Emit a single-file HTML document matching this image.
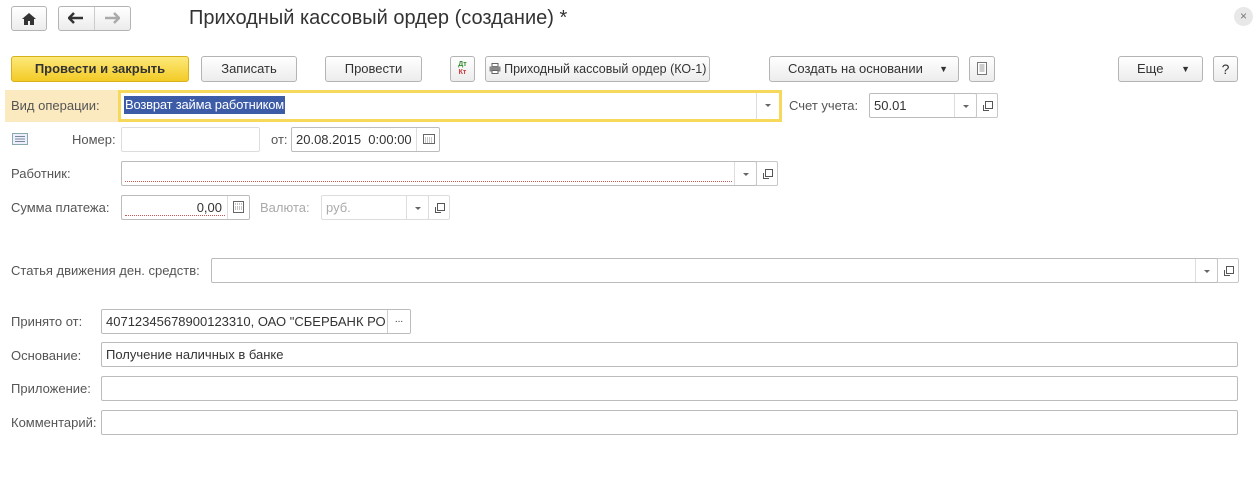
<!DOCTYPE html>
<html><head><meta charset="utf-8"><style>
*{box-sizing:border-box;margin:0;padding:0}
body{width:1257px;height:483px;background:#fff;position:relative;overflow:hidden;font-family:"Liberation Sans",Arial,sans-serif;font-size:13px;color:#333;white-space:nowrap}
.a{position:absolute}
.btn{position:absolute;border:1px solid #b4b4b4;border-radius:3px;background:linear-gradient(#fff,#ececec);text-align:center;color:#333;font-size:13px;line-height:24px}
.f{position:absolute;border:1px solid #bcbcbc;border-radius:2px;background:#fff;height:25px;line-height:23px;padding-left:4px;font-size:13px;color:#333;overflow:hidden}
.lbl{position:absolute;font-size:13px;color:#555;line-height:16px}
.dd{position:absolute;top:0;bottom:0;border-left:1px solid #ddd;width:22px}
.dd:after{content:"";position:absolute;left:8px;top:11px;border-left:3px solid transparent;border-right:3px solid transparent;border-top:3px solid #666}
.op{position:absolute;border:1px solid #c8c8c8;border-radius:0 2px 2px 0;background:#fff;width:22px;height:25px}
.op:after{content:"";position:absolute;left:8px;top:7px;width:6px;height:6px;border:1px solid #555;box-shadow:-2px 2px 0 -1px #fff,-3px 3px 0 -1px #555}
</style></head><body>
<div class="btn" style="left:11px;top:6px;width:36px;height:25px;"><svg width="14" height="12" viewBox="0 0 14 12" style="margin-top:6px"><path d="M7 0L0 6h2v6h4V8h2v4h4V6h2z" fill="#333"/></svg></div>
<div class="btn" style="left:58px;top:6px;width:73px;height:25px;"></div>
<div class="a" style="left:94px;top:7px;width:1px;height:23px;background:#ccc"></div>
<svg class="a" style="left:68px;top:12px" width="16" height="12"><path d="M1 6h14M6 1L1 6l5 5" stroke="#333" stroke-width="2.5" fill="none"/></svg>
<svg class="a" style="left:104px;top:12px" width="16" height="12"><path d="M1 6h14M10 1l5 5-5 5" stroke="#aaa" stroke-width="2.5" fill="none"/></svg>
<div class="a" style="left:189px;top:7px;font-size:20px;color:#333">Приходный кассовый ордер (создание) *</div>
<div class="a" style="left:1234px;top:7px;width:19px;height:19px;border-radius:50%;background:#e8e8e8;text-align:center;line-height:18px;font-size:12px;color:#777">×</div>

<div class="btn" style="left:11px;top:56px;width:178px;height:26px;background:linear-gradient(#fde97a,#f3cb26);border-color:#d7b21c;font-weight:bold;color:#333">Провести и закрыть</div>
<div class="btn" style="left:201px;top:56px;width:96px;height:26px">Записать</div>
<div class="btn" style="left:325px;top:56px;width:97px;height:26px">Провести</div>
<div class="btn" style="left:450px;top:56px;width:25px;height:26px;font-size:7px;line-height:8px;padding-top:4px;font-weight:bold"><span style="color:#2a8a2a">Дт</span><br><span style="color:#c33">Кт</span></div>
<div class="btn" style="left:485px;top:56px;width:225px;height:26px;font-size:12.5px"><svg width="12" height="11" style="vertical-align:-1px"><rect x="3" y=".5" width="6" height="3" fill="#fff" stroke="#666"/><rect x=".5" y="3.5" width="11" height="5" fill="#888"/><rect x="3" y="7.5" width="6" height="3" fill="#fff" stroke="#666"/></svg> Приходный кассовый ордер (КО-1)</div>
<div class="btn" style="left:769px;top:56px;width:190px;height:26px;text-align:left;padding-left:18px">Создать на основании <span style="position:absolute;right:10px;font-size:9px">▼</span></div>
<div class="btn" style="left:969px;top:56px;width:26px;height:26px"><svg width="10" height="13" style="margin-top:5px"><rect x=".5" y=".5" width="9" height="12" fill="#fff" stroke="#777"/><path d="M2.5 3h5M2.5 5h5M2.5 7h5M2.5 9h5" stroke="#999"/></svg></div>
<div class="btn" style="left:1118px;top:56px;width:85px;height:26px;text-align:left;padding-left:18px">Еще <span style="position:absolute;right:12px;font-size:9px">▼</span></div>
<div class="btn" style="left:1213px;top:56px;width:25px;height:26px;font-size:14px">?</div>

<div class="a" style="left:5px;top:90px;width:114px;height:32px;background:#fbe9c0"></div>
<div class="lbl" style="left:11px;top:98px">Вид операции:</div>
<div class="a" style="left:118px;top:90px;width:664px;height:32px;border:3px solid #f6d95a;background:#fff"></div>
<div class="a" style="left:124px;top:96px;height:18px;background:#3d5ca8;color:#fff;line-height:18px;padding:0 1px;letter-spacing:-0.2px">Возврат займа работником</div>
<div class="dd" style="left:756px;top:93px;bottom:auto;height:26px"></div>
<div class="lbl" style="left:789px;top:98px">Счет учета:</div>
<div class="f" style="left:869px;top:93px;width:108px">50.01<div class="dd" style="right:0"></div></div>
<div class="op" style="left:976px;top:93px"></div>

<svg class="a" style="left:12px;top:133px" width="16" height="12"><rect x=".5" y=".5" width="15" height="11" fill="#eef" stroke="#8aa"/><path d="M3 3.5h10M3 6h10M3 8.5h10" stroke="#789"/></svg>
<div class="lbl" style="left:72px;top:132px">Номер:</div>
<div class="f" style="left:121px;top:127px;width:139px;border-color:#ddd"></div>
<div class="lbl" style="left:271px;top:132px">от:</div>
<div class="f" style="left:291px;top:127px;width:149px">20.08.2015 &nbsp;0:00:00<div class="dd" style="right:0;width:23px"></div></div>
<svg class="a" style="left:423px;top:134px" width="12" height="10"><rect x=".5" y=".5" width="11" height="9" fill="#fff" stroke="#666"/><path d="M2 4h8M2 6h8M2 8h8" stroke="#888" stroke-dasharray="1 1"/></svg>

<div class="lbl" style="left:11px;top:166px">Работник:</div>
<div class="f" style="left:121px;top:161px;width:636px"><div class="a" style="left:3px;right:24px;bottom:3px;border-bottom:1px dotted #c55"></div><div class="dd" style="right:0"></div></div>
<div class="op" style="left:756px;top:161px"></div>

<div class="lbl" style="left:11px;top:200px">Сумма платежа:</div>
<div class="f" style="left:121px;top:195px;width:129px;text-align:right;padding-right:27px">0,00<div class="a" style="left:3px;right:24px;bottom:3px;border-bottom:1px dotted #c55"></div><div class="dd" style="right:0;width:22px"></div></div>
<svg class="a" style="left:233px;top:201px" width="11" height="12"><rect x=".5" y=".5" width="10" height="11" fill="#fff" stroke="#666"/><path d="M2 3h7M2 6h7M2 8h7" stroke="#888" stroke-dasharray="1 1"/></svg>
<div class="lbl" style="left:260px;top:200px;color:#aaa">Валюта:</div>
<div class="f" style="left:321px;top:195px;width:108px;color:#aaa;border-color:#ddd">руб.<div class="dd" style="right:0"></div></div>
<div class="op" style="left:428px;top:195px;border-color:#ddd"></div>

<div class="lbl" style="left:11px;top:263px">Статья движения ден. средств:</div>
<div class="f" style="left:211px;top:258px;width:1007px"><div class="dd" style="right:0"></div></div>
<div class="op" style="left:1217px;top:258px"></div>

<div class="lbl" style="left:11px;top:314px">Принято от:</div>
<div class="f" style="left:101px;top:309px;width:310px">40712345678900123310, ОАО "СБЕРБАНК РО<div class="a" style="right:0;top:0;bottom:0;width:23px;border-left:1px solid #ccc;text-align:center;line-height:20px;font-size:10px;background:#fff">...</div></div>
<div class="lbl" style="left:11px;top:348px">Основание:</div>
<div class="f" style="left:101px;top:342px;width:1137px">Получение наличных в банке</div>
<div class="lbl" style="left:11px;top:381px">Приложение:</div>
<div class="f" style="left:101px;top:376px;width:1137px"></div>
<div class="lbl" style="left:11px;top:415px">Комментарий:</div>
<div class="f" style="left:101px;top:410px;width:1137px"></div>
</body></html>
